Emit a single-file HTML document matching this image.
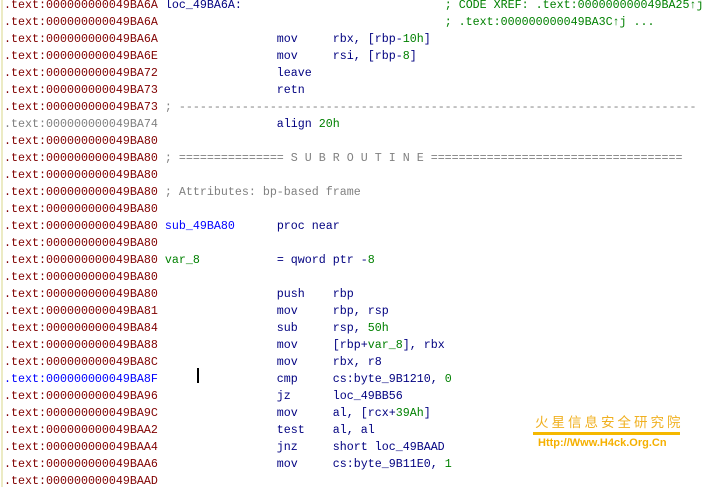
<!DOCTYPE html>
<html><head><meta charset="utf-8"><style>
html,body{margin:0;padding:0;background:#fff;width:724px;height:487px;overflow:hidden;position:relative}
.r{position:absolute;left:4px;height:17px;line-height:17px;font-family:"Liberation Mono",monospace;font-size:11.67px;white-space:pre;color:#000080}
.a{color:#800000}.g{color:#808080}.n{color:#008000}.b{color:#0000ff}.k{color:#000080}
.bar{position:absolute;left:1px;top:0;width:2px;height:487px;background:#ecebc4}
.wm1{position:absolute;left:535px;top:411px;font-family:"Noto Sans CJK SC",sans-serif;font-size:13.5px;color:#f0b020;letter-spacing:3px;white-space:nowrap}
.wmbar{position:absolute;left:533px;top:432px;width:147px;height:3px;background:#f5b800}
.wm2{position:absolute;left:538px;top:437px;font-family:"Liberation Sans",sans-serif;font-weight:bold;font-size:11px;color:#f5b000;white-space:nowrap}
.cur{position:absolute;left:197px;top:368px;width:2px;height:15px;background:#000}
</style></head><body>
<div class="bar"></div>
<div class="r" style="top:-3.5px"><span class="a">.text:000000000049BA6A</span> <span class="k">loc_49BA6A:</span>                             <span class="n">; CODE XREF: .text:000000000049BA25↑j</span></div>
<div class="r" style="top:13.5px"><span class="a">.text:000000000049BA6A</span>                                         <span class="n">; .text:000000000049BA3C↑j ...</span></div>
<div class="r" style="top:30.5px"><span class="a">.text:000000000049BA6A</span>                 mov     rbx, [rbp-<span class="n">10h</span>]</div>
<div class="r" style="top:47.5px"><span class="a">.text:000000000049BA6E</span>                 mov     rsi, [rbp-<span class="n">8</span>]</div>
<div class="r" style="top:64.5px"><span class="a">.text:000000000049BA72</span>                 leave</div>
<div class="r" style="top:81.5px"><span class="a">.text:000000000049BA73</span>                 retn</div>
<div class="r" style="top:98.5px"><span class="a">.text:000000000049BA73</span> <span class="g">; --------------------------------------------------------------------------</span></div>
<div class="r" style="top:115.5px"><span class="g">.text:000000000049BA74</span>                 align <span class="n">20h</span></div>
<div class="r" style="top:132.5px"><span class="a">.text:000000000049BA80</span></div>
<div class="r" style="top:149.5px"><span class="a">.text:000000000049BA80</span> <span class="g">; =============== S U B R O U T I N E ====================================</span></div>
<div class="r" style="top:166.5px"><span class="a">.text:000000000049BA80</span></div>
<div class="r" style="top:183.5px"><span class="a">.text:000000000049BA80</span> <span class="g">; Attributes: bp-based frame</span></div>
<div class="r" style="top:200.5px"><span class="a">.text:000000000049BA80</span></div>
<div class="r" style="top:217.5px"><span class="a">.text:000000000049BA80</span> <span class="b">sub_49BA80</span>      proc near</div>
<div class="r" style="top:234.5px"><span class="a">.text:000000000049BA80</span></div>
<div class="r" style="top:251.5px"><span class="a">.text:000000000049BA80</span> <span class="n">var_8</span>           = qword ptr -<span class="n">8</span></div>
<div class="r" style="top:268.5px"><span class="a">.text:000000000049BA80</span></div>
<div class="r" style="top:285.5px"><span class="a">.text:000000000049BA80</span>                 push    rbp</div>
<div class="r" style="top:302.5px"><span class="a">.text:000000000049BA81</span>                 mov     rbp, rsp</div>
<div class="r" style="top:319.5px"><span class="a">.text:000000000049BA84</span>                 sub     rsp, <span class="n">50h</span></div>
<div class="r" style="top:336.5px"><span class="a">.text:000000000049BA88</span>                 mov     [rbp+<span class="n">var_8</span>], rbx</div>
<div class="r" style="top:353.5px"><span class="a">.text:000000000049BA8C</span>                 mov     rbx, r8</div>
<div class="r" style="top:370.5px"><span class="b">.text:000000000049BA8F</span>                 cmp     cs:byte_9B1210, <span class="n">0</span></div>
<div class="r" style="top:387.5px"><span class="a">.text:000000000049BA96</span>                 jz      loc_49BB56</div>
<div class="r" style="top:404.5px"><span class="a">.text:000000000049BA9C</span>                 mov     al, [rcx+<span class="n">39Ah</span>]</div>
<div class="r" style="top:421.5px"><span class="a">.text:000000000049BAA2</span>                 test    al, al</div>
<div class="r" style="top:438.5px"><span class="a">.text:000000000049BAA4</span>                 jnz     short loc_49BAAD</div>
<div class="r" style="top:455.5px"><span class="a">.text:000000000049BAA6</span>                 mov     cs:byte_9B11E0, <span class="n">1</span></div>
<div class="r" style="top:472.5px"><span class="a">.text:000000000049BAAD</span></div>
<div class="cur"></div>
<div class="wm1">火星信息安全研究院</div>
<div class="wmbar"></div>
<div class="wm2">Http://Www.H4ck.Org.Cn</div>
</body></html>
